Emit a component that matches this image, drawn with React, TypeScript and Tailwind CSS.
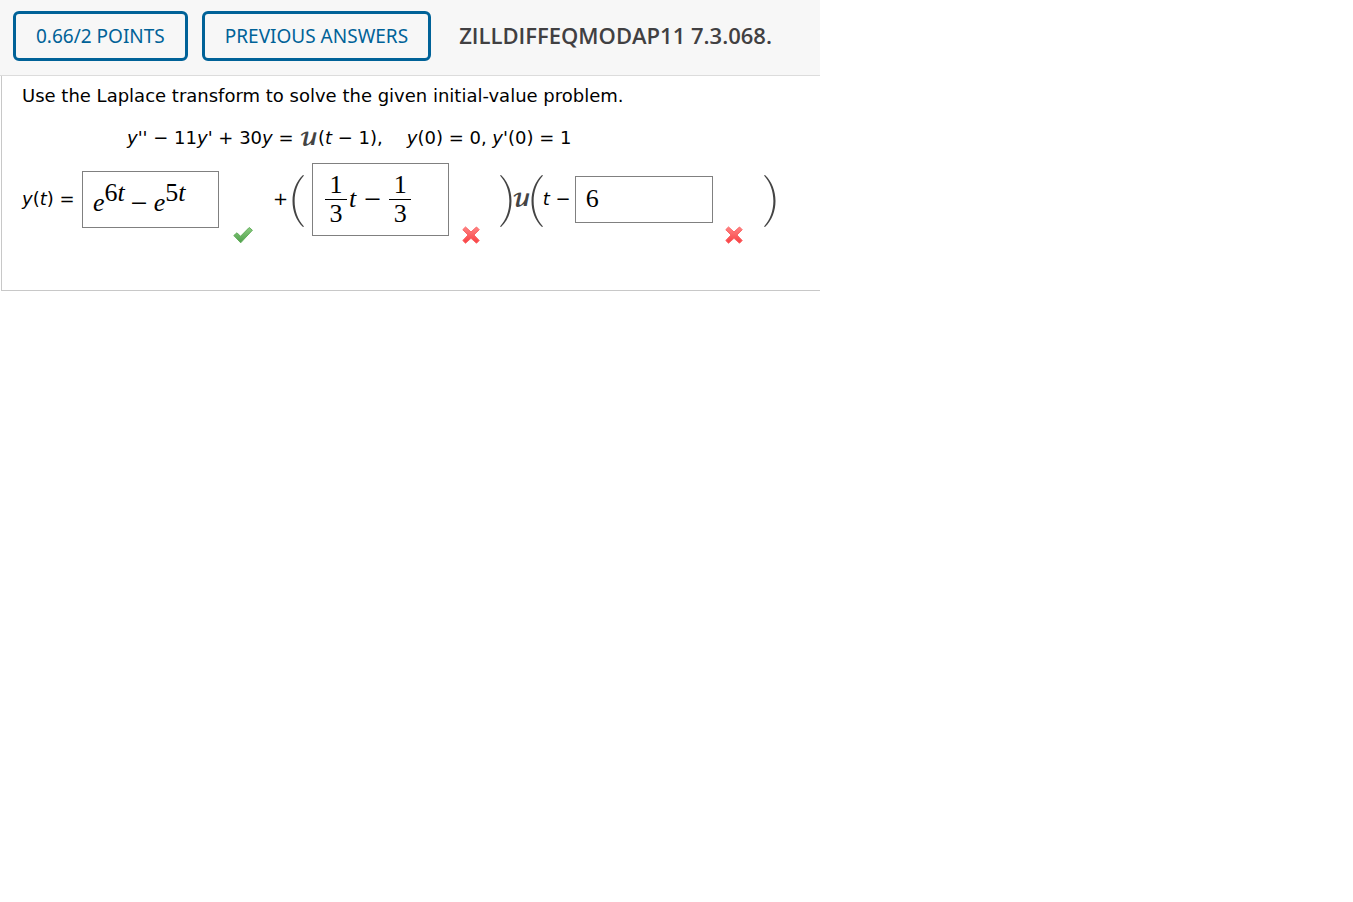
import type { ReactNode } from "react";

const serif = "font-['Liberation_Serif',serif]";

function HeaderButton({ children }: { children: ReactNode }) {
  return (
    <button className="h-[50px] rounded-md border-3 border-[#006298] px-5 font-['Noto_Sans',sans-serif] text-[19px] text-[#006298]">
      {children}
    </button>
  );
}

function Paren({ side }: { side: "left" | "right" }) {
  return (
    <svg
      viewBox="0 0 12 52"
      className="mt-1 h-[52px] w-3 shrink-0"
      fill="#444"
      aria-hidden="true"
    >
      {side === "left" ? (
        <path d="M11 0C-3 13 -3 39 11 52L12 51.5C-.5 38 -.5 14 12 .5Z" />
      ) : (
        <path d="M1 0C15 13 15 39 1 52L0 51.5C12.5 38 12.5 14 0 .5Z" />
      )}
    </svg>
  );
}

function Check() {
  return (
    <svg
      viewBox="0 0 20 18"
      className="mb-0.5 h-[18px] w-5 shrink-0 self-end"
      role="img"
      aria-label="Correct"
    >
      <defs>
        <linearGradient id="check" x1="0" y1="0" x2="0" y2="1">
          <stop offset="0" stopColor="#8bcc80" />
          <stop offset="1" stopColor="#4f9f4b" />
        </linearGradient>
      </defs>
      <path
        d="M.8 9.5L4 6.8L7.5 10.3L16.2 1.5L19.4 4.2L7.7 16.8Z"
        fill="url(#check)"
        stroke="#62ad5b"
        strokeWidth="1"
        strokeLinejoin="round"
      />
    </svg>
  );
}

function Cross() {
  return (
    <svg
      viewBox="0 0 18 18"
      className="mb-0.5 h-[18px] w-[18px] shrink-0 self-end"
      role="img"
      aria-label="Incorrect"
    >
      <defs>
        <linearGradient id="cross" x1="0" y1="0" x2="0" y2="1">
          <stop offset="0" stopColor="#ff8584" />
          <stop offset="1" stopColor="#f83f42" />
        </linearGradient>
      </defs>
      <path
        d="M3.5 1L9 6L14.5 1L17.2 3.7L12 9L17.2 14.5L14.5 17.2L9 12.3L3.5 17.2L.8 14.5L6 9L.8 3.7Z"
        fill="url(#cross)"
        stroke="#fb6263"
        strokeWidth="1"
        strokeLinejoin="round"
      />
    </svg>
  );
}

function Fraction({ top, bottom }: { top: string; bottom: string }) {
  return (
    <span className="inline-flex w-[22px] flex-col items-center leading-7">
      <span>{top}</span>
      <span className="h-px w-full bg-black" />
      <span>{bottom}</span>
    </span>
  );
}

function StepU() {
  return (
    <span className="pt-1 font-['DejaVu_Math_TeX_Gyre','DejaVu_Sans',serif] text-[17px] leading-none text-[#444]">
      𝓤
    </span>
  );
}

export default function App() {
  return (
    <main className="max-w-[820px] bg-white font-['DejaVu_Sans',Verdana,sans-serif] text-[18px] leading-6 text-black">
      <header className="flex h-19 items-center gap-3.5 border-b border-[#dcdcdc] bg-[#f7f7f7] pb-1 pl-[13px] font-['Open_Sans',sans-serif]">
        <HeaderButton>0.66/2 POINTS</HeaderButton>
        <HeaderButton>PREVIOUS ANSWERS</HeaderButton>
        <h1 className="ml-3.5 pb-0.5 text-[22px] font-semibold text-[#414042]">
          ZILLDIFFEQMODAP11 7.3.068.
        </h1>
      </header>

      <section className="ml-px border-b border-l border-[#c8c8c8] pt-2 pb-11 pl-5">
        <p>Use the Laplace transform to solve the given initial-value problem.</p>

        <div className="mt-4 flex h-7 items-center pl-[105px] whitespace-pre">
          <span>
            <i>y''</i> − 11<i>y'</i> + 30<i>y</i> ={" "}
          </span>
          <StepU />
          <span>
            (<i>t</i> − 1),
          </span>
          <span className="ml-6">
            <i>y</i>(0) = 0, <i>y'</i>(0) = 1
          </span>
        </div>

        <div className="flex h-[94px] items-center whitespace-nowrap">
          <span className="w-15">
            <i>y</i>(<i>t</i>) =
          </span>
          <div
            className={`flex h-[57px] w-[137px] shrink-0 items-center border border-[#808080] pl-2.5 text-[26px] ${serif}`}
          >
            <span className="pt-2">
              <i>e</i>
            </span>
            <span className="pb-3">
              6<i>t</i>
            </span>
            <span className="px-1.5 pt-2 text-[30px]">−</span>
            <span className="pt-2">
              <i>e</i>
            </span>
            <span className="pb-3">
              5<i>t</i>
            </span>
          </div>
          <span className="w-3.5" />
          <Check />
          <span className="mr-1 ml-5">+</span>
          <Paren side="left" />
          <div
            className={`ml-2 flex h-[73px] w-[137px] shrink-0 items-center border border-[#808080] pl-3 text-[26px] ${serif}`}
          >
            <Fraction top="1" bottom="3" />
            <i className="pl-0.5">t</i>
            <span className="px-2 text-[30px]">−</span>
            <Fraction top="1" bottom="3" />
          </div>
          <span className="w-[13px]" />
          <Cross />
          <span className="w-5" />
          <Paren side="right" />
          <StepU />
          <Paren side="left" />
          <label htmlFor="shift" className="pr-1">
            <i>t</i> −
          </label>
          <input
            id="shift"
            defaultValue="6"
            className={`h-[47px] w-[138px] shrink-0 border border-[#808080] px-2.5 text-[26px] ${serif}`}
          />
          <span className="w-3" />
          <Cross />
          <span className="w-[21px]" />
          <Paren side="right" />
        </div>
      </section>
    </main>
  );
}
